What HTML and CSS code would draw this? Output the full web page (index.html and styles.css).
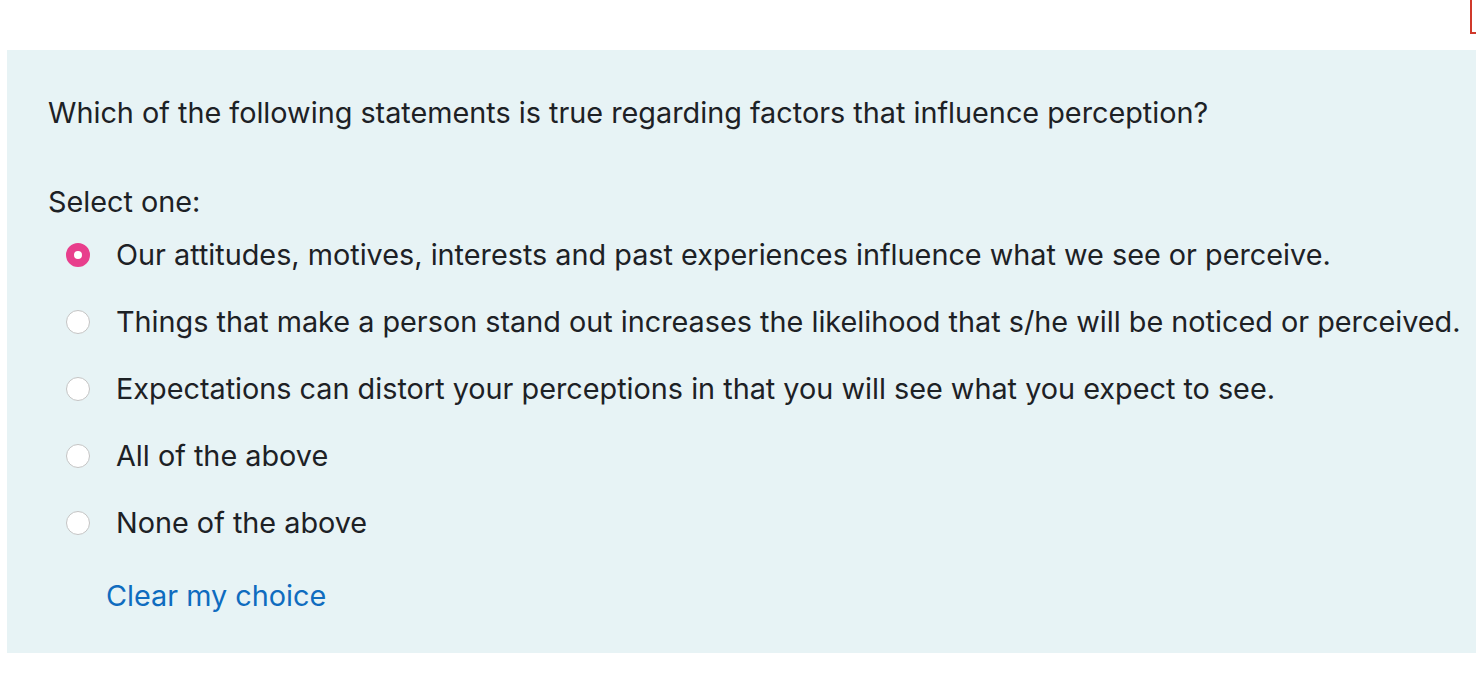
FILE: index.html
```html
<!DOCTYPE html>
<html lang="en">
<head>
    <meta charset="UTF-8">
    <meta name="viewport" content="width=device-width, initial-scale=1.0">
    <title>Question</title>
    <link rel="stylesheet" href="styles.css">
</head>
<body>
    <div class="corner-mark"></div>
    <div class="question-box">
        <p class="question-text">Which of the following statements is true regarding factors that influence perception?</p>
        <div class="answer">
            <p class="prompt">Select one:</p>
            <label class="option">
                <input type="radio" name="q1" value="0" checked>
                <span>Our attitudes, motives, interests and past experiences influence what we see or perceive.</span>
            </label>
            <label class="option">
                <input type="radio" name="q1" value="1">
                <span>Things that make a person stand out increases the likelihood that s/he will be noticed or perceived.</span>
            </label>
            <label class="option">
                <input type="radio" name="q1" value="2">
                <span>Expectations can distort your perceptions in that you will see what you expect to see.</span>
            </label>
            <label class="option">
                <input type="radio" name="q1" value="3">
                <span>All of the above</span>
            </label>
            <label class="option">
                <input type="radio" name="q1" value="4">
                <span>None of the above</span>
            </label>
            <a href="#" class="clear-link">Clear my choice</a>
        </div>
    </div>
</body>
</html>
```

FILE: styles.css
```css
* {
    box-sizing: border-box;
}
body {
    margin: 0;
    padding: 50px 0 20px 7px;
    background-color: white;
    font-family: Inter, "Noto Sans", sans-serif;
    color: #1d2125;
    position: relative;
}
.corner-mark {
    position: absolute;
    top: 0;
    right: 0;
    width: 6px;
    height: 34px;
    border-left: 2px solid #d0392b;
    border-bottom: 2px solid #d0392b;
}
.question-box {
    background-color: #e7f3f5;
    padding: 30px 10px 27px 41px;
    height: 603px;
}
.question-text {
    margin: 0 0 36px 0;
    font-size: 28.8px;
    line-height: 66px;
}
.prompt {
    margin: 0;
    font-size: 28.8px;
    line-height: 40px;
}
.option {
    display: flex;
    align-items: center;
    height: 67px;
    font-size: 28.8px;
    margin-top: -6px;
    margin-bottom: 6px;
}
.prompt + .option {
    margin-top: -1px;
}
.option input {
    appearance: none;
    width: 24px;
    height: 24px;
    margin: 0 26px 0 18px;
    border-radius: 50%;
    border: 1px solid #c4c4c4;
    background-color: white;
    flex-shrink: 0;
}
.option input:checked {
    border: 8px solid #e83e8c;
}
.clear-link {
    display: inline-block;
    margin-left: 58px;
    margin-top: 9px;
    font-size: 28.8px;
    line-height: 50px;
    color: #0f6cbf;
    text-decoration: none;
}
```
